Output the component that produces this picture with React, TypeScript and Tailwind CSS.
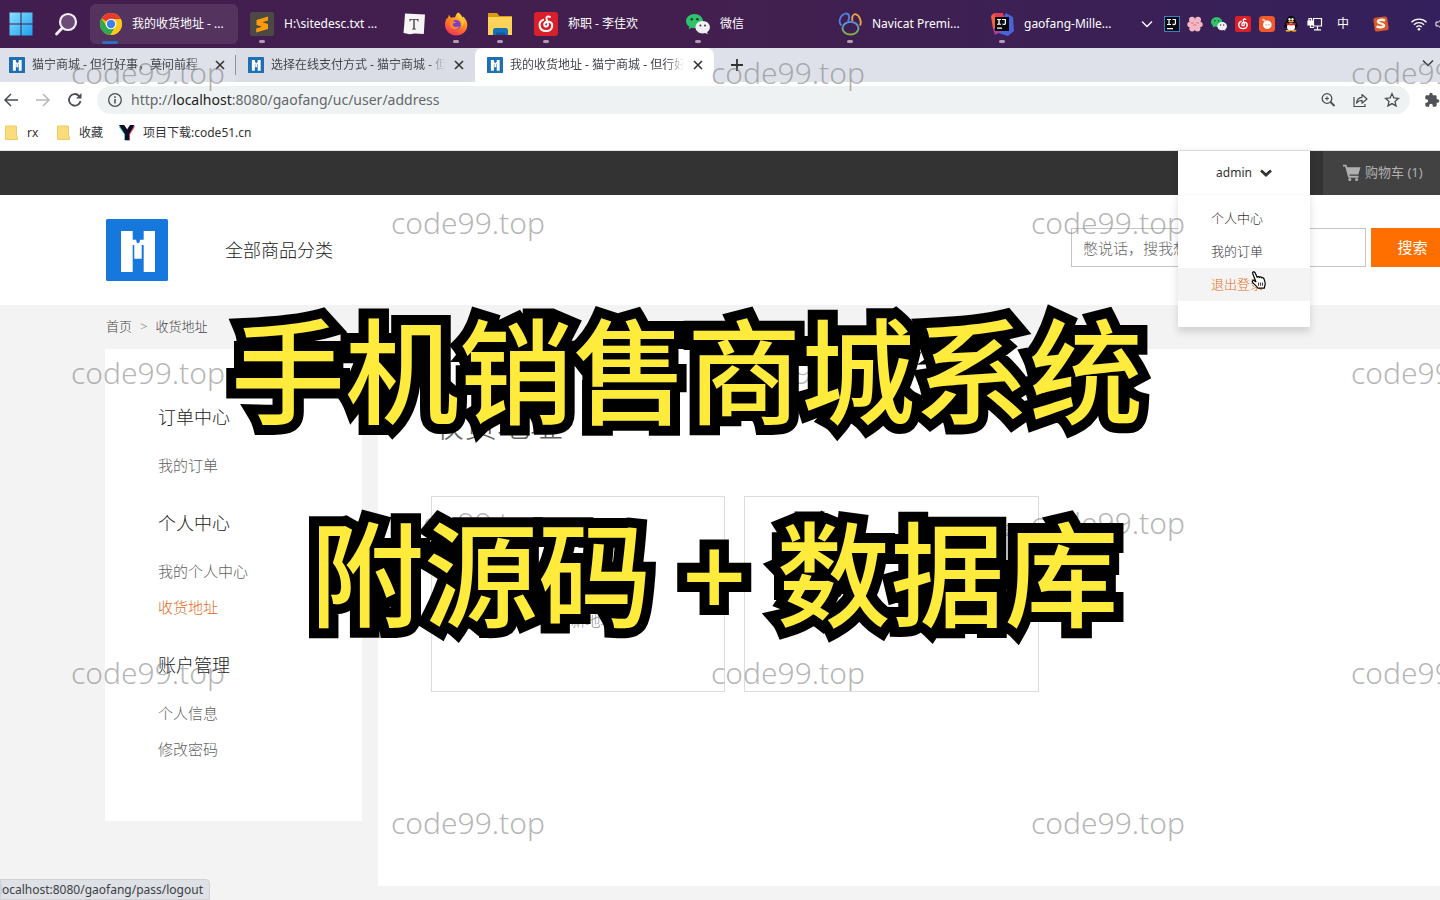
import React from "react";
import type { ReactNode } from "react";

/* ---------- icons ---------- */

function WindowsLogo() {
  return (
    <svg width="24" height="24" viewBox="0 0 24 24" aria-hidden="true">
      <defs>
        <linearGradient id="win" x1="0" y1="0" x2="1" y2="1">
          <stop offset="0" stopColor="#8be0ff" />
          <stop offset="1" stopColor="#1aa0f0" />
        </linearGradient>
      </defs>
      <path fill="url(#win)" d="M.5.5h11v11H.5zM12.5.5h11v11h-11zM.5 12.5h11v11H.5zM12.5 12.5h11v11h-11z" />
    </svg>
  );
}

function SearchGlass() {
  return (
    <svg width="24" height="24" viewBox="0 0 24 24" fill="none" aria-hidden="true">
      <circle cx="14" cy="10" r="8" fill="#6a4c76" stroke="#f4eef6" strokeWidth="2.2" />
      <path d="M8.2 16 2.5 22" stroke="#f4eef6" strokeWidth="2.8" strokeLinecap="round" />
    </svg>
  );
}

function ChromeLogo() {
  return (
    <svg width="24" height="24" viewBox="0 0 24 24" aria-hidden="true">
      <circle cx="12" cy="12" r="11" fill="#fbc116" />
      <path d="M12 12 2.5 6.5A11 11 0 0 1 21.5 6.5L21.9 7H12z" fill="#e33b2e" />
      <path d="M2.5 6.5A11 11 0 0 0 11.5 23L16.3 14.5 12 12 7.7 14.5z" fill="#2da94f" />
      <path d="M12 7h9.8a11 11 0 0 1-10.3 16l4.8-8.500z" fill="#fdc61b" />
      <circle cx="12" cy="12" r="5.300" fill="#fff" />
      <circle cx="12" cy="12" r="4.200" fill="#3f7fe8" />
    </svg>
  );
}

function SublimeLogo() {
  return (
    <svg width="24" height="24" viewBox="0 0 24 24" aria-hidden="true">
      <rect width="24" height="24" rx="2" fill="#4b4846" />
      <path d="M18 4.500 6.500 8v5l5.500 1.800L6.200 16.600V20.500L18 17v-5l-5.600-1.700L18 8.500z" fill="#ff9a0a" />
    </svg>
  );
}

function TyporaLogo() {
  return (
    <svg width="24" height="24" viewBox="0 0 24 24" aria-hidden="true">
      <path d="m3 1.500 20 1-1.200 19.500-9-.500-5 .800L1.500 21l.800-9z" fill="#f6f4f5" />
      <path d="M7.500 7h9v2.600h-.7c-.2-1.300-.7-1.800-2.200-1.800h-.9v8c0 .8.300 1 1.300 1v.7h-4V16.800c1 0 1.300-.2 1.300-1v-8h-.9C8.900 7.800 8.400 8.300 8.200 9.600h-.7z" fill="#444" />
    </svg>
  );
}

function FirefoxLogo() {
  return (
    <svg width="24" height="24" viewBox="0 0 24 24" aria-hidden="true">
      <defs>
        <linearGradient id="fox" x1=".8" y1="0" x2=".3" y2="1">
          <stop offset="0" stopColor="#ffe24a" />
          <stop offset=".45" stopColor="#ff8a1e" />
          <stop offset="1" stopColor="#f4305a" />
        </linearGradient>
      </defs>
      <path fill="url(#fox)" d="M14 .5c2 1.200 3.600 3 4.300 5l1-.9c2.500 2.600 4 5.500 4 8.400C23.300 19 18.400 23.500 12.300 23.500S1 19 1 12.800c0-3 .9-5.500 2.200-7.300l.4 1.600L5 2.600c.3 1.600 1.300 2.700 2.400 3.200 1.200-.6 2.500-.7 3.600-.4.600-2 1.600-3.800 3-4.900z" />
      <circle cx="12" cy="12.800" r="4.800" fill="#7a3fd0" />
      <path d="M6 9.300c2-.8 4.200-.2 6 1.200l-3.200 1.300c-.3 1.800.8 3.200 2.800 3.300 1.700 0 2.700-.8 3.800-.8-.7 2.300-3.400 3.600-6 2.700C6.600 16 5.200 12.500 6 9.300z" fill="#ff8a22" />
      <path d="M14 .5c-2.500 3.400.8 5.500 2.400 7.500 2 2.600 1.500 5.800.4 7.500 4.700-2.700 3.500-8.500 1.500-10-.7-2-2.300-3.800-4.300-5z" fill="#ffc933" opacity=".8" />
    </svg>
  );
}

function FolderLogo() {
  return (
    <svg width="24" height="24" viewBox="0 0 24 24" aria-hidden="true">
      <path d="M0 1h9l2.500 3H24v5H0z" fill="#d99a10" />
      <path d="M0 5h24v18H0z" fill="#ffd35a" />
      <path d="M5 17.500 6.500 16h12l1.500 1.500v5.500H5z" fill="#1770b8" />
      <path d="M8 20.500h9V23H8z" fill="#0f5a9a" />
    </svg>
  );
}

function NeteaseLogo({ size }: { size: number }) {
  return (
    <svg width={size} height={size} viewBox="0 0 24 24" fill="none" aria-hidden="true">
      <rect width="24" height="24" rx="3" fill="#d9202a" />
      <path
        d="M16 5c-1.800-1.200-3.900-.3-3.500 1.700l1.500 5.500c.4 2.800-3.600 3.100-3.800.5-.2-2.400 2.800-3.800 5.200-3 4.300 1.300 3.900 9.300-3.300 9.300-7.600 0-8.400-9-3-11.100"
        stroke="#fff"
        strokeWidth="2"
        strokeLinecap="round"
      />
    </svg>
  );
}

function WechatLogo({ size }: { size: number }) {
  return (
    <svg width={size} height={size} viewBox="0 0 24 24" aria-hidden="true">
      <path d="M8.500 2C3.800 2 0 5.200 0 9.100c0 2.300 1.200 4.200 3.200 5.500L2.600 17.300l3-1.600c1 .3 2 .5 3 .5 4.600 0 8.400-3.200 8.400-7.100S13.200 2 8.500 2z" fill="#2fc36b" />
      <path d="M16.700 9c-4 0-7.200 2.800-7.200 6.200s3.200 6.200 7.200 6.200c.9 0 1.700-.1 2.500-.4l2.500 1.300-.6-2.200c1.700-1.100 2.800-2.900 2.800-4.900C23.900 11.800 20.700 9 16.700 9z" fill="#f1eff3" />
      <g fill="#173f2a">
        <circle cx="5.800" cy="7.200" r="1.200" />
        <circle cx="11.400" cy="7.200" r="1.200" />
        <circle cx="14.400" cy="13.500" r="1" />
        <circle cx="19" cy="13.500" r="1" />
      </g>
    </svg>
  );
}

function NavicatLogo() {
  return (
    <svg width="24" height="24" viewBox="0 0 24 24" fill="none" strokeWidth="1.900" aria-hidden="true">
      <defs>
        <linearGradient id="nav" x1="0" y1="0" x2="0" y2="1">
          <stop offset="0" stopColor="#5a8df0" />
          <stop offset="1" stopColor="#7fb545" />
        </linearGradient>
      </defs>
      <ellipse cx="12.500" cy="16.200" rx="8" ry="6.300" stroke="url(#nav)" />
      <path d="M3.500 13.500C-.5 10 2.500 2.500 7.500 1.600c4-.6 4.500 3.900 2.500 7.600" stroke="#4d7fe0" />
      <path d="M14.500 9c-1-3.500.5-7.300 3-6.800 4 1 6.500 7.500 4.500 11.300" stroke="#e8a33c" />
    </svg>
  );
}

function IdeaBadge({ size }: { size: number }) {
  return (
    <svg width={size} height={size} viewBox="0 0 16 16" aria-hidden="true">
      <rect x=".5" y=".5" width="15" height="15" fill="#0a0a10" stroke="#3c7fc9" />
      <path d="M3 3h4v1H5.600v4H7v1H3V8h1.400V4H3zM8.500 3H12v4.500C12 8.800 11 9.200 10 9.200c-.8 0-1.400-.3-1.800-.8l.7-.8c.8.700 1.900.6 1.900-.3V4H8.500zM3 12h6v1.200H3z" fill="#fff" />
    </svg>
  );
}

function IdeaLogo() {
  return (
    <svg width="24" height="24" viewBox="0 0 24 24" aria-hidden="true">
      <path d="m1 4 3-3 9 1 2 12-12 3z" fill="#f0643c" />
      <path d="m4 1 9 0 2 8-9 3z" fill="#e13c55" />
      <path d="m16 1 7 4 1 14-6 5-13-4z" fill="#4a63d8" />
      <path d="m3 17 9 2-7 4z" fill="#b43c96" />
      <rect x="5" y="5" width="14" height="14" fill="#08080c" />
      <path d="M7 7h4v1.100H9.700v3.600H11v1.100H7v-1.100h1.300V8.100H7zM12 7h4v4.300c0 1.400-.8 1.800-2 1.800-.8 0-1.500-.3-1.900-.8l.8-.8c.8.700 1.800.6 1.800-.3V8.100H12zM7 15.500h5v1.200H7z" fill="#fff" />
    </svg>
  );
}

function ChevronThin({ color }: { color: string }) {
  return (
    <svg width="12" height="8" viewBox="0 0 12 8" fill="none" aria-hidden="true">
      <path d="m1 1.500 5 5 5-5" stroke={color} strokeWidth="1.300" />
    </svg>
  );
}

function FlowerIcon() {
  return (
    <svg width="16" height="16" viewBox="0 0 16 16" aria-hidden="true">
      <g fill="#f3b6c2">
        <circle cx="5" cy="3.800" r="3" />
        <circle cx="11" cy="3.800" r="3" />
        <circle cx="13" cy="8.500" r="2.700" />
        <circle cx="10.500" cy="12.600" r="2.900" />
        <circle cx="5.200" cy="12.600" r="2.900" />
        <circle cx="3" cy="8.500" r="2.700" />
        <circle cx="8" cy="8" r="4" />
      </g>
      <path d="M4 7h2.500M9.500 7H12M6.500 9.500l1.500-1 1.500 1" stroke="#c4778c" fill="none" />
    </svg>
  );
}

function OrangeIcon() {
  return (
    <svg width="16" height="16" viewBox="0 0 16 16" aria-hidden="true">
      <rect width="16" height="16" rx="3.500" fill="#f0592a" />
      <circle cx="8.300" cy="8.800" r="4.300" fill="#fff" />
      <path d="M3.500 3.200 7 5.500" stroke="#ffd7b8" strokeWidth="1.800" />
      <path d="M7 8v1.500M10 8v1.500" stroke="#f08a5a" />
    </svg>
  );
}

function PenguinIcon() {
  return (
    <svg width="16" height="16" viewBox="0 0 16 16" aria-hidden="true">
      <path d="M8 0c3 0 4.500 2 4.500 5 1.500 2 2.700 4.300 2.400 6.200-.5.500-1.200 0-1.700-.7-.3 1.800-1 2.600-1.700 3.200H4.500c-.8-.6-1.500-1.600-1.700-3.200-.5.700-1.200 1.200-1.700.7C.8 9.300 2 7 3.500 5 3.500 2 5 0 8 0z" fill="#0c0c10" />
      <ellipse cx="8" cy="11" rx="4" ry="3.800" fill="#fff" />
      <ellipse cx="6.500" cy="3.300" rx="1.100" ry="1.400" fill="#fff" />
      <ellipse cx="9.500" cy="3.300" rx="1.100" ry="1.400" fill="#fff" />
      <ellipse cx="8" cy="5.600" rx="3" ry=".9" fill="#f5a623" />
      <path d="M3.500 6.800C6 8 10 8 12.500 6.800v1.700C10 9.700 6 9.700 3.500 8.500z" fill="#e02c2c" />
      <ellipse cx="5" cy="14.800" rx="2.500" ry="1" fill="#f5a623" />
      <ellipse cx="11" cy="14.800" rx="2.500" ry="1" fill="#f5a623" />
    </svg>
  );
}

function MonitorIcon() {
  return (
    <svg width="16" height="16" viewBox="0 0 16 16" fill="none" stroke="#fff" strokeWidth="1.200" aria-hidden="true">
      <path d="M6.500 2.500h8v7.500h-8zM10.500 10v3.500M7 13.800h7" />
      <path d="M1 5h5v4H1z" fill="#fff" />
      <path d="M2 5V2.500h2.500V5M3.500 9v2.500H7" />
    </svg>
  );
}

function SogouIcon() {
  return (
    <svg width="18" height="18" viewBox="0 0 18 18" aria-hidden="true">
      <rect x="2" y="2" width="14" height="14" rx="2.500" fill="#d9582f" transform="rotate(-8 9 9)" />
      <path d="M13 5.600C9.500 4 5.500 5 6 7c.4 1.600 6 1.300 6 3.500 0 2-4.500 2.200-7.500.8" fill="none" stroke="#fff3dc" strokeWidth="2.500" />
    </svg>
  );
}

function WifiIcon() {
  return (
    <svg width="18" height="14" viewBox="0 0 18 14" fill="none" stroke="#fff" strokeWidth="1.300" aria-hidden="true">
      <path d="M1.500 5.200a10.600 10.600 0 0 1 15 0M3.900 7.700a7.200 7.200 0 0 1 10.200 0M6.300 10.100a3.800 3.800 0 0 1 5.400 0" />
      <circle cx="9" cy="12.200" r="1.300" fill="#fff" stroke="none" />
    </svg>
  );
}

function SpeakerIcon() {
  return (
    <svg width="14" height="14" viewBox="0 0 14 14" fill="none" stroke="#fff" className="shrink-0" aria-hidden="true">
      <path d="M1 5v4h2.500L7.500 12.500v-11L3.500 5zM10 4.500a4 4 0 0 1 0 5" />
    </svg>
  );
}

function MallMark({ size, fill }: { size: number; fill: string }) {
  return (
    <svg width={size} height={size} viewBox="0 0 62 62" className="shrink-0" aria-hidden="true">
      <rect width="62" height="62" rx="1.500" fill={fill} />
      <path d="M15 12h11.700v8.700h3.300l1 3.300h2.200l1-3.300h3.500V12H49v41H37.700V26h-2v13.700h-7.400V26h-1.600v27H15z" fill="#fff" />
    </svg>
  );
}

function ToolIcon({ children }: { children: ReactNode }) {
  return (
    <svg
      width="16"
      height="16"
      viewBox="0 0 16 16"
      fill="none"
      stroke="currentColor"
      strokeWidth="1.500"
      className="shrink-0"
      aria-hidden="true"
    >
      {children}
    </svg>
  );
}

function BookmarkFolder() {
  return (
    <svg width="13" height="16" viewBox="0 0 13 16" aria-hidden="true">
      <path d="M.5 1h11v10l1 1v2.500H.5z" fill="#fbdc7c" stroke="#eccb62" />
    </svg>
  );
}

function YMark() {
  return (
    <svg width="16" height="16" viewBox="0 0 16 16" aria-hidden="true">
      <path d="M0 1h5l3 4 3.500-4H15l-5 8v6H6V9z" fill="#f0405a" transform="translate(1 .5)" />
      <path d="M0 1h5l3 4 3.500-4H15l-5 8v6H6V9z" fill="#3fd0e0" transform="translate(-.5 .5)" />
      <path d="M0 0h5.200l2.800 4.500L11 0h4.500l-5.300 9v6H5.800V9z" fill="#0c1024" />
    </svg>
  );
}

function CartIcon() {
  return (
    <svg width="18" height="18" viewBox="0 0 18 18" aria-hidden="true">
      <path d="M0 .8h3.400l.8 2.500H17.500L15.300 10.500H6.300l.4 1.300h8.800v1.900H5.300L2.200 2.500H0z" fill="#b0b0b0" />
      <circle cx="6.800" cy="15.600" r="1.500" fill="#b0b0b0" />
      <circle cx="13.600" cy="15.600" r="1.500" fill="#b0b0b0" />
    </svg>
  );
}

function HandCursor() {
  return (
    <svg width="16" height="19" viewBox="0 0 16 19" aria-hidden="true">
      <path
        d="M1.600 2.200C1.300.7 3.500.3 4.100 1.700L6.100 6.300c.5-.9 2-.9 2.300.2.600-.9 2-.7 2.300.4.800-.6 2-.2 2.200.9.800 2 1.500 3.800 1.300 5.300-.2 1.400-.8 2.400-.9 4.100H7C6.200 15.500 3.700 13.700 1.500 11.400c-.8-1.300.6-2.500 1.800-1.700l1.600 1z"
        fill="#fff"
        stroke="#000"
        strokeWidth="1.200"
        strokeLinejoin="round"
      />
      <path d="M7.600 11.500v3.300M9.600 11.500v3.300M11.600 11.500v3.300" stroke="#000" strokeWidth=".8" />
    </svg>
  );
}

/* ---------- desktop taskbar ---------- */

function Task({ icon, label, width }: { icon: ReactNode; label: string; width: string }) {
  return (
    <button type="button" className={`relative flex h-full shrink-0 items-center gap-[10px] pl-[9px] ${width}`}>
      {icon}
      <span className="whitespace-nowrap">{label}</span>
      <span className="absolute bottom-[5px] left-[18px] h-[3px] w-[6px] rounded-full bg-[#b39bb8]" />
    </button>
  );
}

function PinnedTask({ icon, name, width, running }: { icon: ReactNode; name: string; width: string; running?: boolean }) {
  return (
    <button type="button" aria-label={name} className={`relative flex h-full shrink-0 items-center justify-center ${width}`}>
      {icon}
      {running && <span className="absolute bottom-[5px] h-[3px] w-[6px] rounded-full bg-[#b39bb8]" />}
    </button>
  );
}

function Tray({ children, width = "w-6" }: { children: ReactNode; width?: string }) {
  return <span className={`flex shrink-0 items-center justify-center ${width}`}>{children}</span>;
}

function Taskbar() {
  return (
    <div className="flex h-12 items-center overflow-hidden bg-linear-to-r from-[#421e50] via-[#421f4e] to-[#34205c] text-[12px] text-white">
      <PinnedTask icon={<WindowsLogo />} name="开始" width="w-[42px]" />
      <PinnedTask icon={<SearchGlass />} name="搜索栏" width="w-12" />
      <button type="button" className="relative flex h-10 w-[148px] shrink-0 items-center gap-[9px] rounded-md bg-[#54335f] pl-[9px]">
        <ChromeLogo />
        <span className="whitespace-nowrap">我的收货地址 - ...</span>
        <span className="absolute bottom-0 left-3 h-[3px] w-4 rounded-full bg-[#2e6fc0]" />
      </button>
      <span className="w-[3px] shrink-0" />
      <Task icon={<SublimeLogo />} label="H:\sitedesc.txt ..." width="w-[151px]" />
      <PinnedTask icon={<TyporaLogo />} name="Typora" width="w-11" />
      <PinnedTask icon={<FirefoxLogo />} name="Firefox" width="w-10" running />
      <PinnedTask icon={<FolderLogo />} name="文件资源管理器" width="w-12" running />
      <span className="w-px shrink-0" />
      <Task icon={<NeteaseLogo size={24} />} label="称职 - 李佳欢" width="w-[152px]" />
      <Task icon={<WechatLogo size={24} />} label="微信" width="w-[152px]" />
      <Task icon={<NavicatLogo />} label="Navicat Premi..." width="w-[152px]" />
      <Task icon={<IdeaLogo />} label="gaofang-Mille..." width="w-[152px]" />
      <Tray width="w-[28px]">
        <ChevronThin color="#fff" />
      </Tray>
      <Tray width="w-[22px]">
        <IdeaBadge size={16} />
      </Tray>
      <Tray>
        <FlowerIcon />
      </Tray>
      <Tray>
        <WechatLogo size={16} />
      </Tray>
      <Tray>
        <NeteaseLogo size={16} />
      </Tray>
      <Tray>
        <OrangeIcon />
      </Tray>
      <Tray>
        <PenguinIcon />
      </Tray>
      <Tray>
        <MonitorIcon />
      </Tray>
      <Tray width="w-8">中</Tray>
      <Tray width="w-11">
        <SogouIcon />
      </Tray>
      <Tray width="w-8">
        <WifiIcon />
      </Tray>
      <SpeakerIcon />
    </div>
  );
}

/* ---------- browser chrome ---------- */

function Tab({ title, active, divider }: { title: string; active?: boolean; divider?: boolean }) {
  return (
    <div
      className={`flex h-full w-[239px] shrink-0 items-center gap-[7px] pl-3 ${
        active ? "rounded-t-lg bg-white" : divider ? "" : "rounded-br-lg bg-[#dadde5]"
      }`}
    >
      <MallMark size={16} fill="#1f6fb5" />
      <span className="w-[174px] overflow-hidden whitespace-nowrap mask-r-from-90%">{title}</span>
      <button type="button" aria-label="关闭标签页" className="ml-[2px] text-[#333]">
        <svg width="10" height="10" viewBox="0 0 10 10" stroke="currentColor" strokeWidth="1.600" aria-hidden="true">
          <path d="m1 1 8 8M9 1 1 9" />
        </svg>
      </button>
      {divider && <span className="ml-auto h-5 w-px bg-[#8d9096]" />}
    </div>
  );
}

function BrowserChrome() {
  return (
    <div className="overflow-hidden border-b border-[#e3e3e3] bg-white text-[12px] text-[#43464a]">
      <div className="flex h-[34px] items-center bg-[#dee1e9]">
        <div className="-ml-[3px] flex h-full items-center">
          <Tab title="猫宁商城 - 但行好事，莫问前程" divider />
          <Tab title="选择在线支付方式 - 猫宁商城 - 但行" />
          <Tab title="我的收货地址 - 猫宁商城 - 但行好事" active />
        </div>
        <button type="button" aria-label="新标签页" className="ml-4 text-[#333]">
          <svg width="14" height="14" viewBox="0 0 14 14" stroke="currentColor" strokeWidth="1.800" aria-hidden="true">
            <path d="M7 1v12M1 7h12" />
          </svg>
        </button>
        <span className="mr-[6px] mb-1 ml-auto">
          <ChevronThin color="#333" />
        </span>
      </div>

      <div className="flex h-9 items-center gap-4 pl-[3px] text-[#4a4d51]">
        <button type="button" aria-label="后退">
          <ToolIcon>
            <path d="M15 8H2M8 2 2 8l6 6" />
          </ToolIcon>
        </button>
        <button type="button" aria-label="前进" className="text-[#b4b6b9]">
          <ToolIcon>
            <path d="M1 8h13M8 2l6 6-6 6" />
          </ToolIcon>
        </button>
        <button type="button" aria-label="重新加载">
          <ToolIcon>
            <path d="M13.500 9A5.800 5.800 0 1 1 12 3.800" strokeWidth="1.800" />
            <path d="M14.500 1v5.500H9z" fill="currentColor" stroke="none" />
          </ToolIcon>
        </button>
        <div className="-mr-[2px] -ml-[2px] flex h-7 flex-1 items-center gap-4 rounded-full bg-[#eff2f3] pr-[10px] pl-[10px]">
          <ToolIcon>
            <circle cx="8" cy="8" r="6.300" strokeWidth="1.300" />
            <path d="M8 7v4.500M8 4.300v1.600" />
          </ToolIcon>
          <p className="-ml-2 flex-1 text-[14px] leading-5 whitespace-nowrap text-[#63676b]">
            http://<span className="text-[#222]">localhost</span>:8080/gaofang/uc/user/address
          </p>
          <ToolIcon>
            <circle cx="7" cy="6.500" r="4.800" strokeWidth="1.300" />
            <path d="m10.500 10 4 4" strokeWidth="1.800" />
            <path d="M7 4.500v4M5 6.500h4" strokeWidth="1.100" />
          </ToolIcon>
          <ToolIcon>
            <path d="M2 5v9.500h11V12" strokeWidth="1.200" />
            <path d="M4.500 11c.3-3.500 2.300-5.500 5.500-5.700V2.500L15 7l-5 4.200V8.400C7.500 8.400 6 9.200 4.500 11z" strokeWidth="1.200" strokeLinejoin="round" />
          </ToolIcon>
          <ToolIcon>
            <path d="m8 1.700 1.900 4.200 4.500.5-3.400 3 1 4.500-4-2.300-4 2.300 1-4.500-3.400-3 4.500-.5z" strokeWidth="1.300" />
          </ToolIcon>
        </div>
        <svg width="16" height="16" viewBox="0 0 24 24" className="shrink-0" fill="#4f5256" aria-hidden="true">
          <path d="M20.500 11H19V7c0-1.100-.9-2-2-2h-4V3.500a2.500 2.500 0 0 0-5 0V5H4c-1.100 0-2 .9-2 2v3.800h1.500a2.700 2.700 0 0 1 0 5.400H2V20c0 1.100.9 2 2 2h3.800v-1.500a2.700 2.700 0 0 1 5.400 0V22H17c1.100 0 2-.9 2-2v-4h1.500a2.500 2.500 0 0 0 0-5z" />
        </svg>
      </div>

      <div className="flex h-8 items-center pb-[3px] pl-[5px] text-[#333]">
        <a href="#rx" className="flex w-[52px] items-center gap-[9px]">
          <BookmarkFolder />
          rx
        </a>
        <a href="#fav" className="flex w-[62px] items-center gap-[9px]">
          <BookmarkFolder />
          收藏
        </a>
        <a href="#code51" className="flex items-center gap-2">
          <YMark />
          项目下载:code51.cn
        </a>
      </div>
    </div>
  );
}

/* ---------- shop page ---------- */

function AccountMenu() {
  return (
    <div className="relative z-10 h-11 w-[132px] bg-white shadow-[0_2px_8px_rgba(0,0,0,0.15)]">
      <button type="button" className="flex h-full w-full items-center justify-center gap-2 text-[12px] text-[#333]">
        admin
        <svg width="12" height="8" viewBox="0 0 12 8" fill="none" aria-hidden="true">
          <path d="m1 1.500 5 4.500 5-4.500" stroke="#333" strokeWidth="2.800" />
        </svg>
      </button>
      <ul className="absolute top-full left-0 w-full bg-white pt-[7px] pb-[26px] text-[13px] leading-[33px] font-light text-[#333] shadow-[0_5px_8px_rgba(0,0,0,0.15)]">
        <li>
          <a href="#center" className="block pl-[33px]">个人中心</a>
        </li>
        <li>
          <a href="#orders" className="block pl-[33px]">我的订单</a>
        </li>
        <li>
          <a href="#logout" className="block bg-[#f4f4f4] pl-[33px] text-[#e5701c]">退出登录</a>
        </li>
      </ul>
      <span className="absolute top-[120px] left-[73px]">
        <HandCursor />
      </span>
    </div>
  );
}

function ShopHeader() {
  return (
    <header>
      <div className="flex h-11 justify-end bg-[#333]">
        <AccountMenu />
        <a href="#cart" className="ml-[13px] flex w-[117px] items-center gap-1 bg-[#424242] pl-5 text-[13px] whitespace-nowrap text-[#b0b0b0]">
          <CartIcon />
          购物车 (1)
        </a>
      </div>
      <div className="flex h-[110px] items-center overflow-hidden bg-white pl-[106px]">
        <a href="#home" aria-label="猫宁商城">
          <MallMark size={62} fill="#1677dd" />
        </a>
        <a href="#all" className="ml-[57px] text-[18px] font-light text-[#222]">全部商品分类</a>
        <form className="mb-[5px] ml-auto flex gap-[5px]">
          <input
            type="search"
            aria-label="搜索商品"
            placeholder="憋说话，搜我想要的"
            className="h-[39px] w-[295px] border border-[#c4c4c4] px-[11px] text-[15px] font-light placeholder:text-[#666]"
          />
          <button type="button" className="h-[39px] w-[69px] bg-[#ff6f00] pl-[14px] text-[15px] text-white">搜索</button>
        </form>
      </div>
    </header>
  );
}

type MenuLink = { label: string; current?: boolean };

const sections: { title: string; links: MenuLink[] }[] = [
  { title: "订单中心", links: [{ label: "我的订单" }] },
  { title: "个人中心", links: [{ label: "我的个人中心" }, { label: "收货地址", current: true }] },
  { title: "账户管理", links: [{ label: "个人信息" }, { label: "修改密码" }] },
];

function Sidebar() {
  return (
    <aside className="flex w-[257px] shrink-0 flex-col gap-7 bg-white pt-14 pb-[54px] pl-[53px]">
      {sections.map((section) => (
        <section key={section.title}>
          <h2 className="mb-[18px] text-[18px] leading-6 font-light text-[#222]">{section.title}</h2>
          <ul className="text-[15px] leading-9 font-light text-[#616161]">
            {section.links.map((link) => (
              <li key={link.label}>
                <a href={`#${link.label}`} className={link.current ? "text-[#e06a1c]" : ""}>
                  {link.label}
                </a>
              </li>
            ))}
          </ul>
        </section>
      ))}
    </aside>
  );
}

function AddressPanel() {
  return (
    <main className="min-h-[537px] flex-1 bg-white pt-14 pl-[53px]">
      <h1 className="text-[33px] leading-10 font-light text-[#616161]">收货地址</h1>
      <div className="mt-[51px] flex gap-[19px]">
        <button type="button" className="h-[196px] w-[294px] border border-[#dcdcdc] pt-[52px] text-[15px] font-light text-[#8a8a8a]">
          添加新地址
        </button>
        <article className="flex h-[196px] w-[295px] items-start justify-between border border-[#dcdcdc] px-7 pt-[21px]">
          <h3 className="text-[18px] leading-6 font-light text-[#222]">源码</h3>
          <span className="text-[13px] leading-6 font-light text-[#8a8a8a]">校园</span>
        </article>
      </div>
    </main>
  );
}

/* ---------- overlays ---------- */

function Watermarks() {
  const evenRow = "flex h-[300px] gap-[484px] pl-[71px]";
  return (
    <div className="pointer-events-none absolute inset-0 z-20 overflow-hidden text-[30px] leading-10 font-light whitespace-nowrap text-[#777]/55">
      <div className="absolute top-[53px] left-0">
        {[0, 1, 2].map((row) => (
          <div key={row} className={evenRow}>
            {[0, 1, 2].map((col) => (
              <span key={col} className="w-[156px] shrink-0">code99.top</span>
            ))}
          </div>
        ))}
      </div>
      <div className="absolute top-[203px] left-[320px]">
        {[0, 1, 2].map((row) => (
          <div key={row} className={evenRow}>
            {[0, 1].map((col) => (
              <span key={col} className="w-[156px] shrink-0">code99.top</span>
            ))}
          </div>
        ))}
      </div>
    </div>
  );
}

function Caption() {
  return (
    <div className="pointer-events-none absolute top-[269px] left-[231px] z-30 text-[114px] leading-[203px] font-medium whitespace-nowrap text-[#ffeb3b] [-webkit-text-stroke:20px_#000] [paint-order:stroke_fill]">
      <p>手机销售商城系统</p>
      <p className="pl-[79px]">附源码 + 数据库</p>
    </div>
  );
}

export default function App() {
  return (
    <div
      lang="zh-CN"
      className="relative min-h-screen overflow-hidden bg-[#f3f3f3] font-['Noto_Sans','Noto_Sans_CJK_SC',sans-serif]"
    >
      <Taskbar />
      <BrowserChrome />
      <ShopHeader />
      <nav className="flex h-11 items-center gap-2 pl-[106px] text-[13px] font-light text-[#444]">
        <a href="#home">首页</a>
        <span className="text-[#888]">&gt;</span>
        <span>收货地址</span>
      </nav>
      <div className="flex items-start gap-4 pl-[105px]">
        <Sidebar />
        <AddressPanel />
      </div>
      <Watermarks />
      <Caption />
      <div className="absolute bottom-0 left-0 z-20 flex h-[21px] w-[210px] items-center justify-end overflow-hidden rounded-tr border border-[#cfd1d6] bg-[#dee1e6] pr-[6px] text-[12px] whitespace-nowrap text-[#3c4043]">
        localhost:8080/gaofang/pass/logout
      </div>
    </div>
  );
}
